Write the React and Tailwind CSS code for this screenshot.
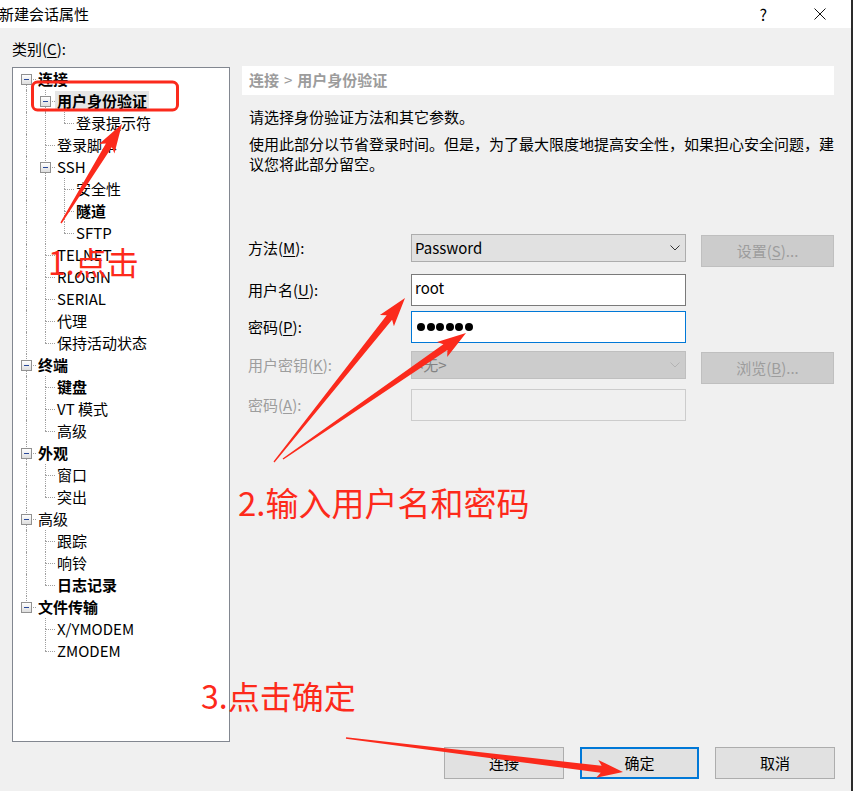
import React from 'react';

const tree = [
  { t: '连接', l: 0, b: true, exp: true },
  { t: '用户身份验证', l: 1, b: true, exp: true, sel: true },
  { t: '登录提示符', l: 2 },
  { t: '登录脚本', l: 1 },
  { t: 'SSH', l: 1, exp: true },
  { t: '安全性', l: 2 },
  { t: '隧道', l: 2, b: true },
  { t: 'SFTP', l: 2 },
  { t: 'TELNET', l: 1 },
  { t: 'RLOGIN', l: 1 },
  { t: 'SERIAL', l: 1 },
  { t: '代理', l: 1 },
  { t: '保持活动状态', l: 1 },
  { t: '终端', l: 0, b: true, exp: true },
  { t: '键盘', l: 1, b: true },
  { t: 'VT 模式', l: 1 },
  { t: '高级', l: 1 },
  { t: '外观', l: 0, b: true, exp: true },
  { t: '窗口', l: 1 },
  { t: '突出', l: 1 },
  { t: '高级', l: 0, exp: true },
  { t: '跟踪', l: 1 },
  { t: '响铃', l: 1 },
  { t: '日志记录', l: 1, b: true },
  { t: '文件传输', l: 0, b: true, exp: true },
  { t: 'X/YMODEM', l: 1 },
  { t: 'ZMODEM', l: 1 },
];

// work out which connector lines continue below each row
const rows = (() => {
  const cont = [];
  return tree.map((r, i) => {
    let next = false;
    for (let j = i + 1; j < tree.length; j++) {
      if (tree[j].l < r.l) break;
      if (tree[j].l === r.l) { next = true; break; }
    }
    const anc = cont.slice(0, r.l);
    cont[r.l] = next;
    return { ...r, next, anc, first: i === 0 };
  });
})();

const dot = 'border-[#a0a0a0] border-dotted';

function TreeRow({ r }) {
  return (
    <div className="flex h-[22px] items-center">
      {r.anc.map((c, k) => (
        <div key={k} className="relative h-full w-[19px] shrink-0">
          {c && <div className={`absolute left-[13px] top-0 bottom-0 border-l ${dot}`} />}
        </div>
      ))}
      <div className="relative h-full w-[23px] shrink-0">
        {!r.first && <div className={`absolute left-[13px] top-0 h-[11px] border-l ${dot}`} />}
        {r.next && <div className={`absolute left-[13px] top-[11px] bottom-0 border-l ${dot}`} />}
        <div className={`absolute left-[13px] top-[11px] w-[10px] border-t ${dot}`} />
        {r.exp && (
          <div className="absolute left-[8px] top-[6px] flex h-[11px] w-[11px] items-center justify-center border border-[#919191] bg-gradient-to-b from-white to-[#dedede]">
            <div className="h-px w-[5px] bg-[#2a4a9a]" />
          </div>
        )}
      </div>
      <span className={`h-[20px] px-[2px] leading-[20px] whitespace-nowrap ${r.b ? 'font-bold' : ''} ${r.sel ? 'bg-[#e5e5e5]' : ''}`}>{r.t}</span>
    </div>
  );
}

function Chevron({ color }) {
  return (
    <svg width="10" height="6" viewBox="0 0 10 6" className="shrink-0">
      <polyline points="0.5,0.5 5,5 9.5,0.5" fill="none" stroke={color} strokeWidth="1" />
    </svg>
  );
}

function arrow(tx, ty, px, py, L, W, w1) {
  const dx = px - tx, dy = py - ty;
  const len = Math.hypot(dx, dy);
  const ux = dx / len, uy = dy / len;
  const nx = -uy, ny = ux;
  const bx = px - ux * L, by = py - uy * L;
  const w0 = 0.7;
  const pts = [
    [tx + nx * w0, ty + ny * w0],
    [bx + nx * w1, by + ny * w1],
    [bx + nx * W - ux * 4, by + ny * W - uy * 4],
    [px, py],
    [bx - nx * W - ux * 4, by - ny * W - uy * 4],
    [bx - nx * w1, by - ny * w1],
    [tx - nx * w0, ty - ny * w0],
  ];
  return pts.map(p => p.map(v => v.toFixed(1)).join(',')).join(' ');
}

const Mn = ({ c }) => <span className="underline underline-offset-2">{c}</span>;

export default function App() {
  return (
    <div className="relative h-[791px] w-[853px] overflow-hidden bg-[#f0f0f0] font-['Noto_Sans_CJK_SC',sans-serif] text-[15px] text-black">
      {/* title bar */}
      <div className="flex h-[28px] items-center bg-white">
        <span className="-ml-[1px] leading-[28px]">新建会话属性</span>
        <span className="ml-auto mr-[47px] text-[16px] leading-[28px]">?</span>
        <svg width="12" height="12" viewBox="0 0 12 12" className="mr-[27px]">
          <path d="M0.5 0.5 L11.5 11.5 M11.5 0.5 L0.5 11.5" stroke="#111" strokeWidth="1" />
        </svg>
      </div>

      <div className="flex flex-col">
        <div className="flex">
          {/* category tree */}
          <div className="w-[230px] shrink-0 pl-[12px] pt-[11px]">
            <div className="h-[20px] leading-[20px]">类别(<Mn c="C" />):</div>
            <div className="mt-[8px] h-[675px] border border-[#828790] bg-white">
              {rows.map((r, i) => <TreeRow key={i} r={r} />)}
            </div>
          </div>

          {/* right panel */}
          <div className="ml-[12px] w-[592px] shrink-0">
            <div className="mt-[38px] flex h-[29px] items-center bg-white pl-[7px] font-bold text-[#9c9c9c]">
              连接 <span className="mx-[5px] font-normal">&gt;</span> 用户身份验证
            </div>
            <div className="mt-[12px] pl-[7px] leading-[20px]">请选择身份验证方法和其它参数。</div>
            <div className="mt-[7px] pl-[7px] leading-[20px]">
              <div className="whitespace-nowrap">使用此部分以节省登录时间。但是，为了最大限度地提高安全性，如果担心安全问题，建</div>
              <div className="whitespace-nowrap">议您将此部分留空。</div>
            </div>

            {/* form */}
            <div className="mt-[60px] flex h-[33px] items-start pl-[6px]">
              <div className="w-[163px] leading-[28px]">方法(<Mn c="M" />):</div>
              <div className="flex h-[28px] w-[275px] items-center justify-between border border-[#adadad] bg-[#e1e1e1] pl-[3px] pr-[5px]">
                <span>Password</span>
                <Chevron color="#333" />
              </div>
              <div className="ml-[15px] mt-[1px] flex h-[32px] w-[133px] items-center justify-center border border-[#bfbfbf] bg-[#cccccc] text-[#9d9d9d]">
                设置(<Mn c="S" />)...
              </div>
            </div>
            <div className="mt-[7px] flex h-[32px] items-center pl-[6px]">
              <div className="w-[163px]">用户名(<Mn c="U" />):</div>
              <div className="flex h-[32px] w-[275px] items-center border border-[#7a7a7a] bg-white pb-[3px] pl-[3px]">root</div>
            </div>
            <div className="mt-[5px] flex h-[32px] items-center pl-[6px]">
              <div className="w-[163px]">密码(<Mn c="P" />):</div>
              <div className="flex h-[32px] w-[275px] items-center gap-[1.5px] border border-[#0078d7] bg-white pl-[5px]">
                {[0, 1, 2, 3, 4, 5].map(i => <span key={i} className="h-[8px] w-[8px] rounded-full bg-black" />)}
              </div>
            </div>
            <div className="mt-[8px] flex h-[33px] items-start pl-[6px] text-[#9d9d9d]">
              <div className="w-[163px] leading-[28px]">用户密钥(<Mn c="K" />):</div>
              <div className="flex h-[28px] w-[275px] items-center justify-between border border-[#bfbfbf] bg-[#cccccc] pl-[3px] pr-[5px] text-[#838383]">
                <span>&lt;无&gt;</span>
                <Chevron color="#b3b3b3" />
              </div>
              <div className="ml-[15px] mt-[1px] flex h-[32px] w-[133px] items-center justify-center border border-[#bfbfbf] bg-[#cccccc]">
                浏览(<Mn c="B" />)...
              </div>
            </div>
            <div className="mt-[5px] flex h-[32px] items-center pl-[6px] text-[#9d9d9d]">
              <div className="w-[163px]">密码(<Mn c="A" />):</div>
              <div className="h-[32px] w-[275px] border border-[#cccccc] bg-[#f0f0f0]" />
            </div>
          </div>
        </div>

        {/* dialog buttons */}
        <div className="mt-[5px] flex justify-end gap-[16px] pr-[18px]">
          <div className="flex h-[32px] w-[120px] items-center justify-center border border-[#adadad] bg-[#e1e1e1]">连接</div>
          <div className="flex h-[32px] w-[119px] items-center justify-center border-2 border-[#0078d7] bg-[#e1e1e1]">确定</div>
          <div className="flex h-[32px] w-[120px] items-center justify-center border border-[#adadad] bg-[#e1e1e1]">取消</div>
        </div>
      </div>

      {/* window edge */}
      <div className="absolute right-0 top-0 h-full w-[2px] bg-[#2b2b2b]" />

      {/* red annotations */}
      <svg className="pointer-events-none absolute left-0 top-0" width="853" height="791">
        <rect x="32.5" y="82" width="145" height="28" rx="5" fill="none" stroke="#fb2a1c" strokeWidth="3" />
        <polygon points={arrow(61, 223, 122, 124, 25, 9, 3.5)} fill="#fb2a1c" />
        <polygon points={arrow(274, 462, 405, 298, 25, 9, 3.5)} fill="#fb2a1c" />
        <polygon points={arrow(283, 459, 466, 333, 25, 9, 3.5)} fill="#fb2a1c" />
        <polygon points={arrow(346, 738, 623, 772, 22, 9, 3.5)} fill="#fb2a1c" />
      </svg>
      <div className="absolute left-[48px] top-[245px] text-[32px] leading-[32px] text-[#fd2a1b]">1.点击</div>
      <div className="absolute left-[238px] top-[486px] text-[33px] leading-[33px] text-[#fd2a1b]">2.输入用户名和密码</div>
      <div className="absolute left-[201px] top-[679px] text-[32px] leading-[32px] text-[#fd2a1b]">3.点击确定</div>
    </div>
  );
}
